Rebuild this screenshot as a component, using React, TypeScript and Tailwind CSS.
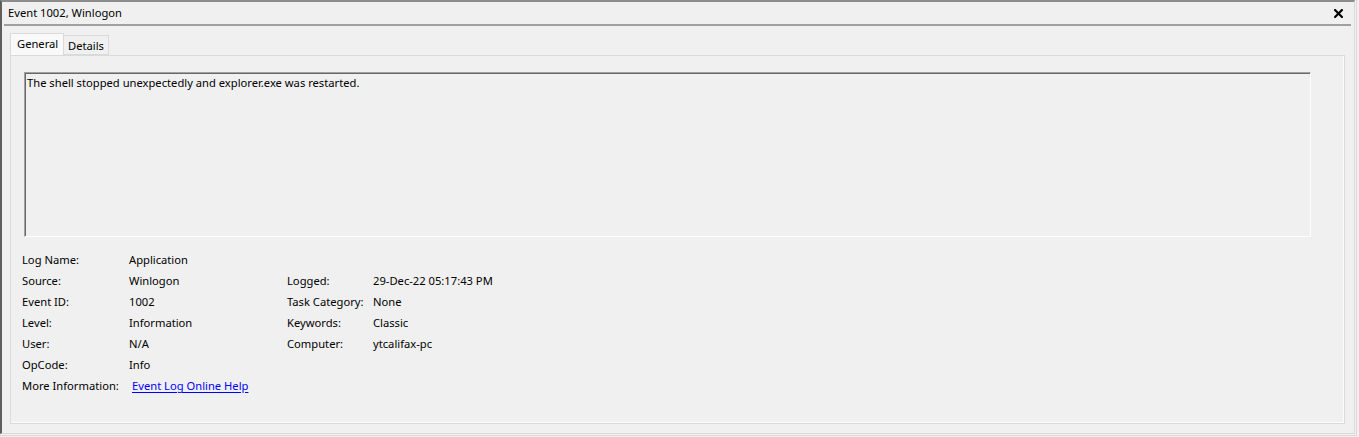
import React from 'react';

interface Field {
  label: string;
  value: string;
  link?: boolean;
}

// left column and right column of the General tab
const leftFields: Field[] = [
  { label: "Log Name:", value: "Application" },
  { label: "Source:", value: "Winlogon" },
  { label: "Event ID:", value: "1002" },
  { label: "Level:", value: "Information" },
  { label: "User:", value: "N/A" },
  { label: "OpCode:", value: "Info" },
  { label: "More Information:", value: "Event Log Online Help", link: true },
];

const rightFields: (Field | null)[] = [
  null,
  { label: "Logged:", value: "29-Dec-22 05:17:43 PM" },
  { label: "Task Category:", value: "None" },
  { label: "Keywords:", value: "Classic" },
  { label: "Computer:", value: "ytcalifax-pc" },
  null,
  null,
];

function CloseIcon() {
  return (
    <svg viewBox="0 0 9 9" className="w-[9px] h-[9px]">
      <line x1="1" y1="1" x2="8" y2="8" stroke="#000" strokeWidth="2.2" strokeLinecap="square" />
      <line x1="8" y1="1" x2="1" y2="8" stroke="#000" strokeWidth="2.2" strokeLinecap="square" />
    </svg>
  );
}

export default function App() {
  return (
    <div className="w-[1359px] h-[437px] bg-[#f0f0f0] overflow-hidden font-['Segoe_UI','Noto_Sans',sans-serif] text-[11.2px] text-black">
      <div className="w-[1357px] h-[436px] border-r border-b border-[#dadada] pr-px pb-px">
        <div className="h-full flex flex-col border-l-2 border-l-[#5f5f5f] border-t-2 border-t-[#8c8c8c] border-r border-b border-r-[#dadada] border-b-[#dadada]">
          {/* Title bar */}
          <div className="h-[22px] flex items-center justify-between pl-[6px] pr-[11px]">
            <span className="leading-none">Event 1002, Winlogon</span>
            <CloseIcon />
          </div>
          <div className="h-[2px] bg-[#a0a0a0] ml-[2px] mr-[3px]" />

          {/* Tabs */}
          <div className="flex ml-[8px] mt-[7px]">
            <div className="w-[54px] h-[22px] -mb-px relative z-10 border border-b-0 border-[#d9d9d9] bg-[#f9f9f9] pl-[6px] pt-[2px] leading-[15px]">
              General
            </div>
            <div className="w-[45px] h-[20px] mt-[2px] border border-l-0 border-[#dadada] bg-[#f0f0f0] pl-[4px] pt-[2px] leading-[15px]">
              Details
            </div>
          </div>

          {/* Tab panel */}
          <div className="ml-[8px] w-[1335px] h-[369px] border border-[#dadada] shadow-[inset_-1px_-1px_0_#fbfbfb] pl-[11px] pt-[16px]">
            <div className="ml-[2px] w-[1287px] h-[165px] border border-t-[#a0a0a0] border-l-[#a0a0a0] border-r-[#fdfdfd] border-b-[#fdfdfd] shadow-[inset_1px_1px_0_#696969] pl-[2px] pt-[2px] leading-[15px]">
              The shell stopped unexpectedly and explorer.exe was restarted.
            </div>

            <div className="mt-[12px] grid grid-cols-[107px_158px_86px_auto] auto-rows-[21px] leading-[21px]">
              {leftFields.map((f, i) => {
                const r = rightFields[i];
                return (
                  <React.Fragment key={f.label}>
                    <span>{f.label}</span>
                    {f.link ? (
                      <span className="pl-[3px]">
                        <span className="text-[#0000ff] underline underline-offset-2">{f.value}</span>
                      </span>
                    ) : (
                      <span>{f.value}</span>
                    )}
                    <span>{r ? r.label : ""}</span>
                    <span>{r ? r.value : ""}</span>
                  </React.Fragment>
                );
              })}
            </div>
          </div>
        </div>
      </div>
    </div>
  );
}
